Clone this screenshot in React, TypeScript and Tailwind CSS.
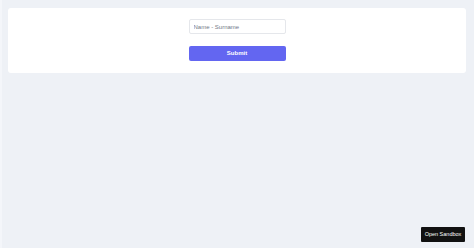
import { useState } from "react";

export default function App() {
  const [name, setName] = useState("");

  return (
    <main className="relative h-[248px] min-h-screen border-l-2 border-[#f4f6fa] bg-[#eef1f6] font-['Liberation_Sans',Arial,sans-serif]">
      <div className="p-[8px] pl-[6px]">
        <form
          onSubmit={(e) => e.preventDefault()}
          className="flex flex-col items-center gap-[12px] rounded-[3px] bg-white pt-[11px] pb-[12px]"
        >
          <input
            value={name}
            onChange={(e) => setName(e.target.value)}
            placeholder="Name - Surname"
            className="h-[15px] w-[97px] rounded-[2px] border border-[#e5e7eb] px-[4px] font-['Liberation_Sans',Arial,sans-serif] text-[6px] text-gray-700 outline-none placeholder:text-[#737987]"
          />
          <button
            type="submit"
            className="h-[15px] w-[97px] rounded-[2px] bg-[#6366f1] font-['Liberation_Sans',Arial,sans-serif] text-[6px] font-bold text-white"
          >
            Submit
          </button>
        </form>
      </div>

      {/* sandbox badge */}
      <button className="absolute right-[9px] bottom-[6px] h-[15px] w-[44px] rounded-[1px] bg-[#111111] font-['Liberation_Sans',Arial,sans-serif] text-[5.5px] text-white">
        Open Sandbox
      </button>
    </main>
  );
}
